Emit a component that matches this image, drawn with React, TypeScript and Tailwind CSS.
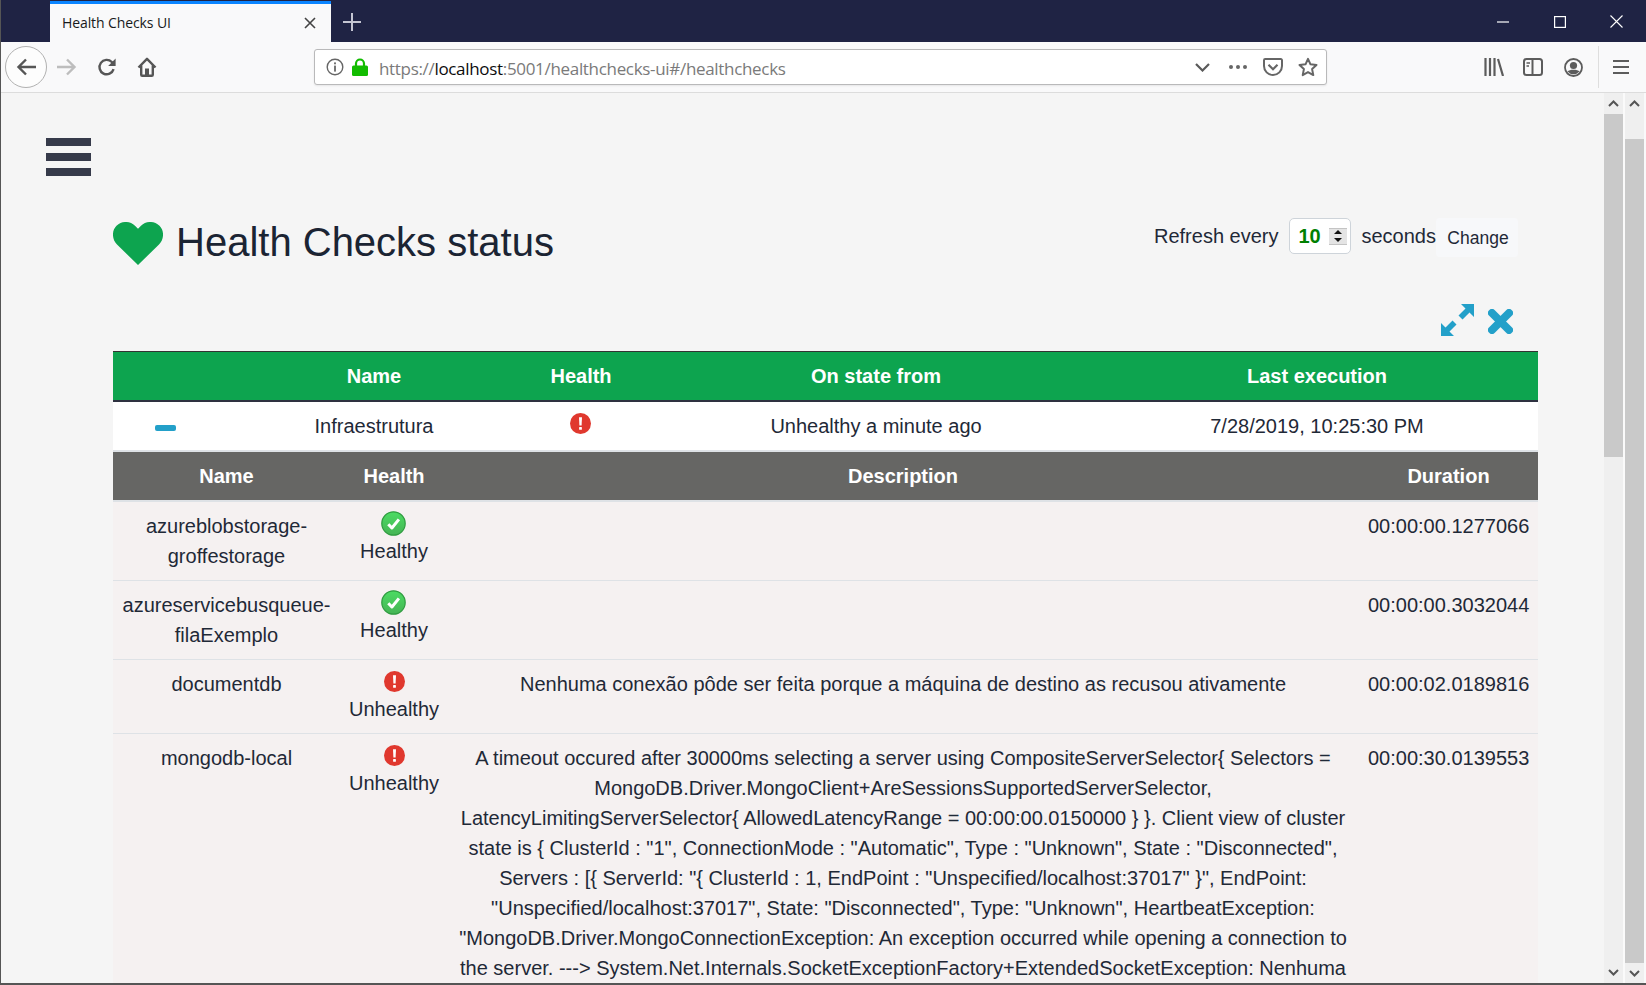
import React from "react";

const Check = () => (
  <svg width="25" height="25" viewBox="0 0 25 25" className="mx-auto block">
    <defs>
      <linearGradient id="g" x1="0" y1="0" x2="0" y2="1">
        <stop offset="0" stopColor="#4cdc63" />
        <stop offset="1" stopColor="#45b455" />
      </linearGradient>
    </defs>
    <circle cx="12.5" cy="12.5" r="11.7" fill="url(#g)" stroke="#2f9c40" strokeWidth="1.2" />
    <path d="M7.3 13.2l3.6 3.8 7-8.6" fill="none" stroke="#fff" strokeWidth="3" strokeLinejoin="round" />
  </svg>
);

const Bad = ({ cls = "mx-auto block" }: { cls?: string }) => (
  <svg width="21" height="21" viewBox="0 0 21 21" className={cls}>
    <circle cx="10.5" cy="10.5" r="10.5" fill="#e0382e" />
    <path d="M9 4.2h3l-.4 8.4H9.4z" fill="#fff" />
    <rect x="9.1" y="14" width="2.8" height="2.8" rx="0.6" fill="#fff" />
  </svg>
);

const Ico = ({ w, h, children, cls = "" }: { w: number; h: number; children: React.ReactNode; cls?: string }) => (
  <svg width={w} height={h} viewBox={`0 0 ${w} ${h}`} fill="none" className={cls}>
    {children}
  </svg>
);

const Scrollbar = ({ top, thumb, track }: { top: number; thumb: number; track: string }) => (
  <div className={`flex w-[19px] flex-col ${track}`}>
    <div className="flex h-[21px] shrink-0 items-center justify-center">
      <Ico w={11} h={7}><path d="M1 6l4.5-4.5L10 6" stroke="#555" strokeWidth="2" /></Ico>
    </div>
    <div style={{ height: top }} className="shrink-0" />
    <div style={{ height: thumb }} className="shrink-0 bg-[#c9c9c9]" />
    <div className="flex-1" />
    <div className="flex h-[21px] shrink-0 items-center justify-center">
      <Ico w={11} h={7}><path d="M1 1l4.5 4.5L10 1" stroke="#555" strokeWidth="2" /></Ico>
    </div>
  </div>
);

const rows: { name: string; ok: boolean; desc: string; dur: string }[] = [
  { name: "azureblobstorage-groffestorage", ok: true, desc: "", dur: "00:00:00.1277066" },
  { name: "azureservicebusqueue-filaExemplo", ok: true, desc: "", dur: "00:00:00.3032044" },
  { name: "documentdb", ok: false, desc: "Nenhuma conexão pôde ser feita porque a máquina de destino as recusou ativamente", dur: "00:00:02.0189816" },
  {
    name: "mongodb-local",
    ok: false,
    desc: 'A timeout occured after 30000ms selecting a server using CompositeServerSelector{ Selectors = MongoDB.Driver.MongoClient+AreSessionsSupportedServerSelector, LatencyLimitingServerSelector{ AllowedLatencyRange = 00:00:00.0150000 } }. Client view of cluster state is { ClusterId : "1", ConnectionMode : "Automatic", Type : "Unknown", State : "Disconnected", Servers : [{ ServerId: "{ ClusterId : 1, EndPoint : "Unspecified/localhost:37017" }", EndPoint: "Unspecified/localhost:37017", State: "Disconnected", Type: "Unknown", HeartbeatException: "MongoDB.Driver.MongoConnectionException: An exception occurred while opening a connection to the server. ---> System.Net.Internals.SocketExceptionFactory+ExtendedSocketException: Nenhuma',
    dur: "00:00:30.0139553",
  },
];

export default function App() {
  return (
    <div className="flex h-[985px] w-[1646px] flex-col overflow-hidden border-b-2 border-l border-[#555] bg-[#f5f5f5] font-['Liberation_Sans',sans-serif] text-[20px] leading-[30px] text-[#1f2937]">
      {/* title bar */}
      <div className="flex h-[42px] shrink-0 items-stretch bg-[#1f2344] pt-px">
        <div className="ml-[49px] flex w-[281px] items-center border-t-[3px] border-[#0a84ff] bg-[#f9f9fa] pl-[12px] pr-[15px] font-['Open_Sans',sans-serif] text-[14px] tracking-[-0.1px] text-[#18191a]">
          <span className="flex-1">Health Checks UI</span>
          <Ico w={12} h={12}><path d="M1 1l10 10M11 1L1 11" stroke="#444" strokeWidth="1.6" /></Ico>
        </div>
        <div className="ml-[12px] flex items-center">
          <Ico w={18} h={18}><path d="M9 0v18M0 9h18" stroke="#c4c5d2" strokeWidth="2" /></Ico>
        </div>
        <div className="flex-1" />
        <div className="flex items-center">
          <Ico w={12} h={2} cls="mr-[45px]"><path d="M0 1h12" stroke="#fff" strokeWidth="1.2" /></Ico>
          <Ico w={12} h={12} cls="mr-[44px]"><rect x=".6" y=".6" width="10.8" height="10.8" stroke="#fff" strokeWidth="1.2" /></Ico>
          <Ico w={13} h={13} cls="mr-[23px]"><path d="M.5.5l12 12M12.5.5l-12 12" stroke="#fff" strokeWidth="1.1" /></Ico>
        </div>
      </div>

      {/* toolbar */}
      <div className="flex h-[51px] shrink-0 items-center border-b border-[#dcdcdc] bg-[#f9f9fa]">
        <div className="ml-[4px] flex h-[42px] w-[42px] items-center justify-center rounded-full border border-[#b1b1b1] bg-[#fdfdfd]">
          <Ico w={20} h={18}><path d="M10 1.5L2.5 9l7.5 7.5M2.5 9H20" stroke="#565656" strokeWidth="2.4" /></Ico>
        </div>
        <div className="flex w-[40px] justify-center">
          <Ico w={20} h={18}><path d="M10 1.5L17.5 9 10 16.5M17.5 9H0" stroke="#bdbdbd" strokeWidth="2.4" /></Ico>
        </div>
        <div className="flex w-[40px] justify-center">
          <Ico w={20} h={20}><path d="M16.6 12.2A7.2 7.2 0 1 1 14.8 5l2.4 2.3" stroke="#565656" strokeWidth="2.4" /><path d="M18.6 1.5v7.5h-7.500z" fill="#565656" /></Ico>
        </div>
        <div className="flex w-[40px] justify-center">
          <Ico w={20} h={20}><path d="M1.500 10.500L10 1.800l8.500 8.700M4.200 8.500v9.300a1 1 0 0 0 1 1h9.600a1 1 0 0 0 1-1V8.500" stroke="#565656" strokeWidth="2.400" strokeLinejoin="round" /><rect x="8" y="11.500" width="4" height="7" fill="#565656" /></Ico>
        </div>
        <div className="ml-[147px] flex h-[36px] w-[1013px] items-center rounded-[3px] border border-[#b9b9ba] bg-white shadow-[0_1px_2px_rgba(0,0,0,0.08)]">
          <Ico w={18} h={18} cls="ml-[11px]"><circle cx="9" cy="9" r="7.800" stroke="#666" strokeWidth="1.400" /><rect x="8.100" y="7.600" width="1.800" height="6" fill="#666" /><rect x="8.100" y="4.400" width="1.800" height="1.900" fill="#666" /></Ico>
          <Ico w={16} h={18} cls="ml-[8px]"><path d="M4 8V5.500a4 4 0 0 1 8 0V8" stroke="#12bc00" strokeWidth="2.200" /><rect y="7.500" width="16" height="10.500" rx="1.500" fill="#12bc00" /></Ico>
          <span className="ml-[11px] mt-[3px] flex-1 whitespace-nowrap font-['Open_Sans',sans-serif] text-[17px] leading-[20px] tracking-[-0.32px] text-[#7a7a7a]">
            https://<span className="text-[#0c0c0d]">localhost</span>:5001/healthchecks-ui#/healthchecks
          </span>
          <Ico w={15} h={9}><path d="M1 1l6.500 6.500L14 1" stroke="#5a5a5a" strokeWidth="2.200" /></Ico>
          <Ico w={20} h={4} cls="ml-[18px]"><circle cx="3" cy="2" r="2" fill="#666" /><circle cx="10" cy="2" r="2" fill="#666" /><circle cx="17" cy="2" r="2" fill="#666" /></Ico>
          <Ico w={20} h={18} cls="ml-[15px]"><path d="M1 2.200a1.200 1.200 0 0 1 1.200-1.200h15.600A1.200 1.200 0 0 1 19 2.200V8a9 9 0 0 1-18 0z" stroke="#666" strokeWidth="2" /><path d="M5.500 6.800l4.500 4.400 4.500-4.400" stroke="#666" strokeWidth="2.200" /></Ico>
          <Ico w={20} h={20} cls="ml-[15px] mr-[8px]"><path d="M10 1.800l2.500 5.500 6 .7-4.400 4.100 1.200 6L10 15.100l-5.300 3 1.200-6L1.500 8l6-.7z" stroke="#666" strokeWidth="2" strokeLinejoin="round" /></Ico>
        </div>
        <Ico w={20} h={18} cls="ml-[157px]"><path d="M1.500 0v18M6 0v18M10.500 0v18M14 1l5 17" stroke="#5c5c5c" strokeWidth="2.200" /></Ico>
        <Ico w={20} h={18} cls="ml-[19px]"><rect x="1" y="1" width="18" height="16" rx="2.500" stroke="#5c5c5c" strokeWidth="2" /><path d="M9.500 1v16" stroke="#5c5c5c" strokeWidth="2" /><path d="M3.500 5h3.500M3.500 8h2.500" stroke="#5c5c5c" strokeWidth="1.400" /></Ico>
        <Ico w={19} h={19} cls="ml-[21px]"><circle cx="9.500" cy="9.500" r="8.500" stroke="#5c5c5c" strokeWidth="1.800" /><circle cx="9.500" cy="7.500" r="3.600" fill="#5c5c5c" /><path d="M3.500 13.500c2-2.400 10-2.400 12 0a8 8 0 0 1-12 0z" fill="#5c5c5c" /></Ico>
        <div className="ml-[15px] h-[42px] w-px bg-[#dedede]" />
        <Ico w={16} h={16} cls="ml-[14px]"><path d="M0 2h16M0 8h16M0 14h16" stroke="#5c5c5c" strokeWidth="2.200" /></Ico>
      </div>

      {/* page */}
      <div className="flex min-h-0 flex-1">
        <div className="min-w-0 flex-1 overflow-hidden pl-[112px] pr-[66px] pt-[45px]">
          <div className="-ml-[67px] flex w-[45px] flex-col gap-[7px]">
            <div className="h-[8px] bg-[#363a4a]" />
            <div className="h-[8px] bg-[#363a4a]" />
            <div className="h-[8px] bg-[#363a4a]" />
          </div>
          <div className="mt-[36px] flex h-[70px] items-start">
            <svg width="50" height="43" viewBox="0 0 50 43" className="mt-[10px] shrink-0">
              <path d="M25 43L4 22.500C-1.300 17-1.300 8.500 3.500 3.800 8.800-1.400 17-1.200 22 3.800L25 6.800l3-3c5-5 13.200-5.200 18.500 0 4.800 4.700 4.800 13.200-.5 18.700z" fill="#0da44f" />
            </svg>
            <h1 className="ml-[13px] text-[40px] leading-[60px] text-[#1b2433]">Health Checks status</h1>
            <div className="flex-1" />
            <div className="mt-[6px] flex items-start">
              <span className="leading-[36px]">Refresh every</span>
              <div className="ml-[10px] flex h-[36px] w-[62px] items-center rounded-[5px] border border-[#ced4da] bg-white pl-[9px]">
                <span className="flex-1 font-bold leading-[30px] text-[#008000]">10</span>
                <div className="mr-[3px] flex h-[17px] w-[18px] flex-col items-center justify-around border-y border-[#c4c4c4] bg-[#e4e4e4]">
                  <Ico w={8} h={4}><path d="M4 0l4 4H0z" fill="#111" /></Ico>
                  <Ico w={8} h={4}><path d="M0 0h8L4 4z" fill="#111" /></Ico>
                </div>
              </div>
              <span className="ml-[11px] leading-[36px]">seconds</span>
              <span className="flex h-[39px] w-[82px] items-center justify-center rounded-[4px] bg-[#f7f8fa] pl-[2px] text-[17.5px]">Change</span>
            </div>
            <div className="w-[20px]" />
          </div>
          <div className="mt-[21px] flex h-[48px] items-start pr-[25px]">
            <div className="flex-1" />
            <svg width="33" height="34" viewBox="0 0 33 34">
              <path d="M20 1h13v13l-4.500-4.500-7 7-4-4 7-7zM13 33H0V20l4.500 4.500 7-7 4 4-7 7z" fill="#23a0c9" />
            </svg>
            <svg width="25" height="25" viewBox="0 0 25 25" className="ml-[14px] mt-[6px]">
              <path d="M4 4l17 17M21 4L4 21" stroke="#23a0c9" strokeWidth="8" strokeLinecap="round" />
            </svg>
          </div>

          <table className="w-[1425px] table-fixed border-collapse text-center">
            <colgroup>
              <col className="w-[129px]" />
              <col className="w-[264px]" />
              <col className="w-[150px]" />
              <col className="w-[440px]" />
              <col className="w-[442px]" />
            </colgroup>
            <thead>
              <tr className="h-[49px] border-t border-b-2 border-t-[#333] border-b-[#2e3140] bg-[#0da44f] font-bold text-white">
                <th></th>
                <th>Name</th>
                <th>Health</th>
                <th>On state from</th>
                <th>Last execution</th>
              </tr>
            </thead>
            <tbody>
              <tr className="h-[49px] bg-white">
                <td className="pl-[42px] text-left">
                  <div className="mt-[4px] h-[6px] w-[21px] rounded-[2px] bg-[#23a0c9]" />
                </td>
                <td>Infraestrutura</td>
                <td><Bad cls="relative -left-px mx-auto -mt-[5px] block" /></td>
                <td>Unhealthy a minute ago</td>
                <td>7/28/2019, 10:25:30 PM</td>
              </tr>
              <tr>
                <td colSpan={5} className="p-0">
                  <table className="w-full table-fixed border-collapse border-t-2 border-[#dee2e6] bg-[#f5f1f1]">
                    <colgroup>
                      <col className="w-[227px]" />
                      <col className="w-[109px]" />
                      <col className="w-[908px]" />
                      <col className="w-[181px]" />
                    </colgroup>
                    <thead>
                      <tr className="h-[50px] border-b-2 border-[#dee2e6] bg-[#666664] font-bold text-white">
                        <th>Name</th>
                        <th className="pr-[1px]">Health</th>
                        <th>Description</th>
                        <th className="pl-[2px]">Duration</th>
                      </tr>
                    </thead>
                    <tbody>
                      {rows.map((r) => (
                        <tr key={r.name} className="border-b border-[#dee2e6] align-top">
                          <td className="px-[9px] py-[9px] [overflow-wrap:anywhere]">
                            {r.name}
                          </td>
                          <td className="pb-[9px] pl-[4px] pr-[5px] pt-[8px]">
                            <div className={`flex h-[26px] items-start justify-center ${r.ok ? "pr-px pt-px" : "pt-[3px]"}`}>
                              {r.ok ? <Check /> : <Bad />}
                            </div>
                            {r.ok ? "Healthy" : "Unhealthy"}
                          </td>
                          <td className="px-[10px] py-[9px]">{r.desc}</td>
                          <td className="py-[9px] pl-[11px] pr-[10px]">{r.dur}</td>
                        </tr>
                      ))}
                    </tbody>
                  </table>
                </td>
              </tr>
            </tbody>
          </table>
        </div>
        <Scrollbar top={0} thumb={343} track="bg-[#efefef]" />
        <div className="w-[2px] bg-[#fafafa]" />
        <Scrollbar top={25} thumb={824} track="bg-[#efefef]" />
        <div className="w-[2px] bg-[#f9f9fa]" />
      </div>
    </div>
  );
}
